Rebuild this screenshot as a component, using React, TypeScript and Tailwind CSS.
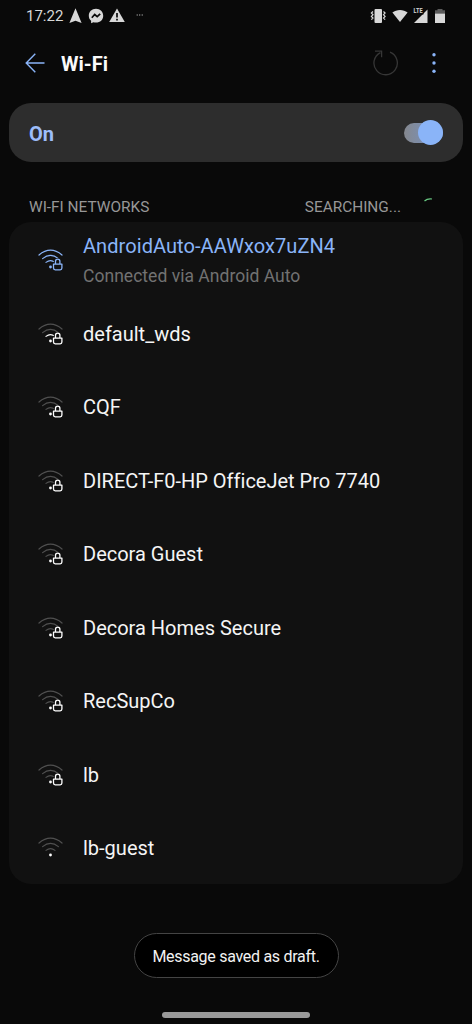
import React from "react";

type Network = {
  name: string;
  detail?: string;
  level: number;
  secured: boolean;
};

const networks: Network[] = [
  { name: "AndroidAuto-AAWxox7uZN4", detail: "Connected via Android Auto", level: 3, secured: true },
  { name: "default_wds", level: 1, secured: true },
  { name: "CQF", level: 0, secured: true },
  { name: "DIRECT-F0-HP OfficeJet Pro 7740", level: 0, secured: true },
  { name: "Decora Guest", level: 0, secured: true },
  { name: "Decora Homes Secure", level: 0, secured: true },
  { name: "RecSupCo", level: 0, secured: true },
  { name: "lb", level: 0, secured: true },
  { name: "lb-guest", level: 0, secured: false },
];

const arcs = ["M8 13.4Q12.5 9.8 17 13.4", "M4.6 9.6Q12.5 3 20.4 9.6", "M1 6Q12.5 -3.6 24 6"];

const SignalIcon: React.FC<{ network: Network; connected: boolean }> = ({ network, connected }) => {
  const on = connected ? "#8ab4f8" : "#ffffff";
  return (
    <svg width="26" height="22" viewBox="0 0 26 22" fill="none" className="shrink-0">
      {arcs.map((d, i) => (
        <path key={d} d={d} stroke={i < network.level ? on : "#505050"} strokeWidth="1.2" strokeLinecap="round" />
      ))}
      <circle cx="12.5" cy="18" r="1.4" fill={on} />
      {network.secured && (
        <>
          <path d="M14.3 22V13.2H15.8V9H23.5V13.2H26V22Z" fill="#111111" />
          <path
            d="M17.5 15V12.3A2.2 2.2 0 0 1 21.9 12.3V15M15.5 15.1H23.9V19Q23.9 20.8 22.2 20.8H17.2Q15.5 20.8 15.5 19Z"
            stroke={on}
            strokeWidth="1.3"
            strokeLinejoin="round"
          />
        </>
      )}
    </svg>
  );
};

const StatusBar: React.FC = () => (
  <div className="flex h-8 items-center justify-between pl-[26px] pr-[27px] text-[#d8d8d8]">
    <div className="flex items-center">
      <span className="w-[43px] whitespace-nowrap text-[15px] leading-none">17:22</span>
      <svg width="13" height="16" viewBox="0 0 13 16" fill="currentColor">
        <path d="M6.5 0.3L12.6 15L6.5 12.8L0.4 15Z" />
      </svg>
      <svg width="16" height="16" viewBox="0 0 16 16" className="ml-[6px]">
        <path d="M8 .8C3.8.8.8 3.8.8 7.7c0 2.1.9 3.9 2.3 5.1v2.4l2.3-1c.8.3 1.7.4 2.6.4 4.2 0 7.2-3 7.2-6.9S12.2.8 8 .8Z" fill="currentColor" />
        <path d="M3.8 9.7L6.7 6.5L9.2 8.7L12.2 5.8" stroke="#090909" strokeWidth="1.7" fill="none" />
      </svg>
      <svg width="16" height="16" viewBox="0 0 16 16" className="ml-[5px]">
        <path d="M8 .5L15.8 14H.2Z" fill="currentColor" />
        <path d="M8 5V9.5M8 10.8V12.5" stroke="#090909" strokeWidth="1.7" />
      </svg>
      <svg width="8" height="2" viewBox="0 0 8 2" fill="#9a9a9a" className="ml-[11px] -translate-y-px">
        <circle cx="1.2" cy="1" r=".7" />
        <circle cx="3.7" cy="1" r=".7" />
        <circle cx="6.2" cy="1" r=".7" />
      </svg>
    </div>
    <div className="flex items-center">
      <svg width="16" height="16" viewBox="0 0 16 16">
        <rect x="4.5" y="1" width="7.5" height="14" rx="1" fill="currentColor" />
        <path d="M3 3.5L1.4 5L3 6.7L1.4 8.4L3 10L1.4 11.7M13.5 3.5L15.1 5L13.5 6.7L15.1 8.4L13.5 10L15.1 11.7" stroke="currentColor" strokeWidth="1.2" fill="none" />
      </svg>
      <svg width="16" height="14" viewBox="0 0 16 14" fill="currentColor" className="ml-[6px]">
        <path d="M8 13L.4 3.5C4.6 0 11.4 0 15.6 3.5Z" />
      </svg>
      <svg width="15" height="16" viewBox="0 0 15 16" className="ml-[5px]">
        <path d="M14.5 1.5V15H1Z" fill="currentColor" />
        <rect x="0" y="0" width="10.5" height="6.5" fill="#090909" />
        <text x="0.6" y="5.4" fontSize="6.4" fontWeight="700" fill="currentColor" textLength="9" lengthAdjust="spacingAndGlyphs">
          LTE
        </text>
      </svg>
      <svg width="10" height="16" viewBox="0 0 10 16" className="ml-[7px]">
        <path d="M2.5 1H7.5V2.3H10V5.5H0V2.3H2.5Z" fill="#5b5b5b" />
        <path d="M0 5.5H10V15H0Z" fill="currentColor" />
      </svg>
    </div>
  </div>
);

const Toolbar: React.FC = () => (
  <header className="flex h-[71px] items-center pl-[25px] pr-[35px] pb-[9px]">
    <button aria-label="Back">
      <svg width="20" height="20" viewBox="0 0 20 20" fill="none" stroke="#8ab4f8" strokeWidth="1.4">
        <path d="M10.3 .8L1.2 10L10.3 19.2M1.2 10H19.5" />
      </svg>
    </button>
    <h1 className="ml-[16px] pt-px text-[20px] leading-6 font-bold text-[#fafafa]">Wi-Fi</h1>
    <button aria-label="Refresh" className="ml-auto">
      <svg width="26" height="26" viewBox="0 0 26 26" fill="none" stroke="#363636" strokeWidth="1.3">
        <path d="M8.6 7.2V1.2H2M17 2.2A11.7 11.7 0 1 1 7.4 2.6" />
      </svg>
    </button>
    <button aria-label="More options" className="ml-[32px]">
      <svg width="6" height="22" viewBox="0 0 6 22" fill="#8ab4f8">
        <circle cx="3" cy="2.7" r="1.7" />
        <circle cx="3" cy="11" r="1.7" />
        <circle cx="3" cy="19.3" r="1.7" />
      </svg>
    </button>
  </header>
);

const NetworkRow: React.FC<{ network: Network }> = ({ network }) => {
  const connected = Boolean(network.detail);
  return (
    <li className={`flex items-center pl-[29px] ${connected ? "h-[75px]" : "h-[73.5px]"}`}>
      <SignalIcon network={network} connected={connected} />
      <div className="ml-[19px] whitespace-nowrap [font-variant-ligatures:none]">
        {network.detail ? (
          <>
            <p className="mt-[3px] text-[20px] leading-7 tracking-[0.07px] text-[#8ab4f8]">{network.name}</p>
            <p className="mt-[2px] text-[17.5px] leading-7 tracking-[0.03px] text-[#727272]">{network.detail}</p>
          </>
        ) : (
          <p className="text-[20px] leading-7 text-[#f5f5f5]">{network.name}</p>
        )}
      </div>
    </li>
  );
};

const App: React.FC = () => {
  return (
    <div className="flex h-[1024px] w-[472px] flex-col overflow-hidden bg-[#090909] font-['Roboto',sans-serif]">
      <StatusBar />
      <Toolbar />

      {/* Wi-Fi switch */}
      <div className="mx-[9px] flex h-[59px] items-center justify-between rounded-[22px] bg-[#2d2d2d] pl-5 pr-5">
        <span className="pt-0.5 text-[20px] font-bold text-[#9dbdfa]">On</span>
        <div className="flex h-[20px] w-[39px] items-center justify-end rounded-full bg-linear-to-r from-[#85888e] to-[#7193cf]">
          <div className="size-[25px] shrink-0 rounded-full bg-[#8ab4f8]" />
        </div>
      </div>

      {/* Section title */}
      <div className="flex h-[60px] items-end px-[29px] pb-[5px] text-[15.4px] leading-5 text-[#979797]">
        <span>WI-FI NETWORKS</span>
        <span className="ml-auto">SEARCHING...</span>
        <svg width="16" height="16" viewBox="0 0 16 16" fill="none" className="mb-[3px] ml-[22px] mr-[4px] self-end">
          <path d="M1.5 3Q4.5 .3 9 1" stroke="#69c983" strokeWidth="1.2" />
        </svg>
      </div>

      <ul className="mx-[9px] h-[662px] overflow-hidden rounded-[22px] bg-[#111111]">
        {networks.map((network) => (
          <NetworkRow key={network.name} network={network} />
        ))}
      </ul>

      {/* Toast */}
      <div className="mx-auto mt-[49px] flex h-[45px] w-[205px] items-center justify-center rounded-full border border-[#444444] bg-black pt-0.5 text-[16px] tracking-[-0.29px] text-[#f2f2f2]">
        Message saved as draft.
      </div>

      <div className="mx-auto mt-[34px] h-[6px] w-[148px] rounded-full bg-[#999999]" />
    </div>
  );
};

export default App;
